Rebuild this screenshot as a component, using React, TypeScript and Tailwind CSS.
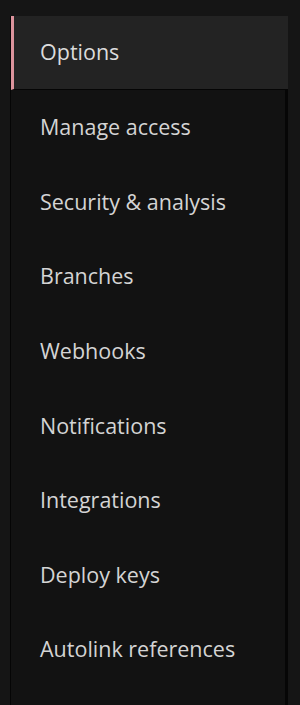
import React from 'react';

const items = [
  'Options',
  'Manage access',
  'Security & analysis',
  'Branches',
  'Webhooks',
  'Notifications',
  'Integrations',
  'Deploy keys',
  'Autolink references',
];

export default function App() {
  return (
    <div
      className="min-h-[705px] h-[705px] overflow-hidden bg-[#151515] pt-4 pl-[10px] pr-3"
      style={{ fontFamily: '"Open Sans", "Liberation Sans", sans-serif' }}
    >
      <nav className="flex flex-col border-l border-r-[3px] border-l-[#050505] border-r-[#060606] bg-[#121212] h-full">
        {items.map((label, i) => {
          const active = i === 0;
          return (
            <a
              key={label}
              href="#"
              className={
                active
                  ? 'flex items-center h-[74px] shrink-0 bg-[#232323] border-l-[3px] border-[#dc939c] pl-[26px] text-[21.5px] text-[#dcdcdc] -mr-[3px] border-b border-b-[#050505]'
                  : 'flex items-center h-[74.6px] shrink-0 pl-[29px] text-[21.5px] text-[#d4d4d4]'
              }
            >
              {label}
            </a>
          );
        })}
      </nav>
    </div>
  );
}
